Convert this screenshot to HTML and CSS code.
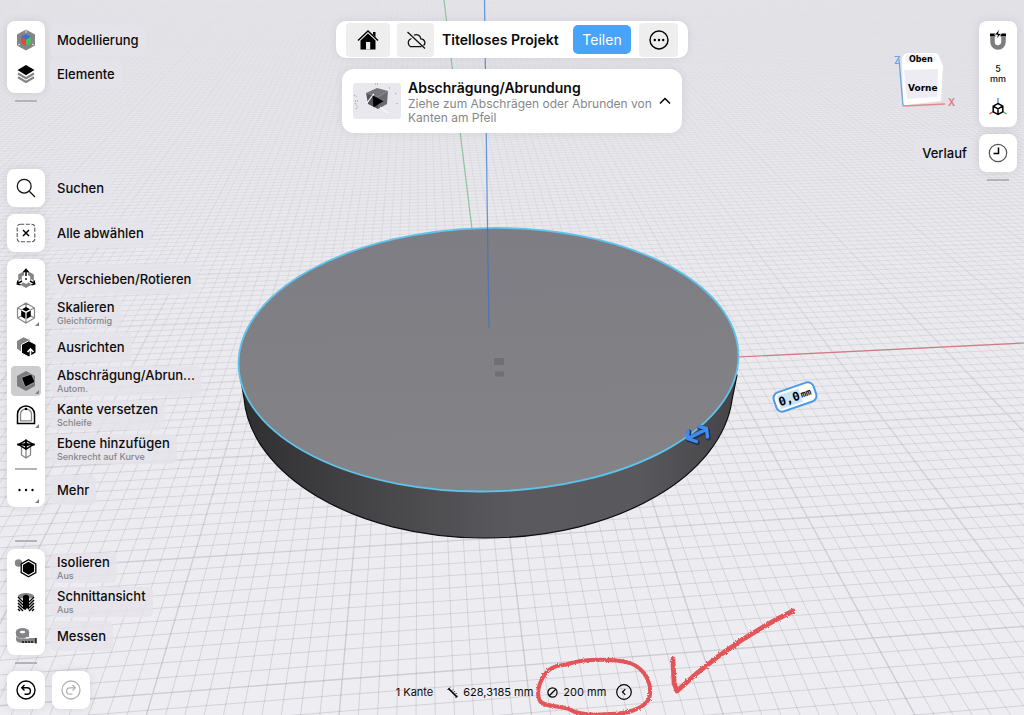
FILE: index.html
```html
<!DOCTYPE html>
<html lang="de">
<head>
<meta charset="utf-8">
<meta name="viewport" content="width=device-width, initial-scale=1">
<title>Titelloses Projekt</title>
<link rel="stylesheet" href="styles.css">
</head>
<body>
<div class="app">
  <svg class="scene" viewBox="0 0 1024 715" preserveAspectRatio="xMidYMid slice" aria-hidden="true">
    <defs>
      <linearGradient id="fadeMinor" gradientUnits="userSpaceOnUse" x1="0" y1="0" x2="0" y2="715">
        <stop offset="0" stop-color="#85858f" stop-opacity=".02"/>
        <stop offset=".15" stop-color="#85858f" stop-opacity=".07"/>
        <stop offset=".35" stop-color="#85858f" stop-opacity=".13"/>
        <stop offset=".6" stop-color="#85858f" stop-opacity=".2"/>
        <stop offset="1" stop-color="#85858f" stop-opacity=".26"/>
      </linearGradient>
      <linearGradient id="fadeMajor" gradientUnits="userSpaceOnUse" x1="0" y1="0" x2="0" y2="715">
        <stop offset="0" stop-color="#75757f" stop-opacity=".02"/>
        <stop offset=".3" stop-color="#75757f" stop-opacity=".09"/>
        <stop offset=".6" stop-color="#75757f" stop-opacity=".2"/>
        <stop offset="1" stop-color="#75757f" stop-opacity=".28"/>
      </linearGradient>
      <linearGradient id="side" x1="0" x2="1" y1="0" y2="0">
        <stop offset="0" stop-color="#2f2f31"/>
        <stop offset=".3" stop-color="#48484b"/>
        <stop offset=".55" stop-color="#5a5a5e"/>
        <stop offset=".8" stop-color="#59595d"/>
        <stop offset="1" stop-color="#444447"/>
      </linearGradient>
      <linearGradient id="top" x1="0" x2="0" y1="0" y2="1">
        <stop offset="0" stop-color="#7d7d83"/>
        <stop offset="1" stop-color="#848387"/>
      </linearGradient>
    </defs>
    <path id="gridMinor" fill="none" stroke="url(#fadeMinor)"/>
    <path id="gridMajor" fill="none" stroke="url(#fadeMajor)" stroke-width="1.4"/>
    <path d="M444 0L472 229" stroke="#8fc69c" stroke-width="1.2"/>
    <path d="M738 357L1024 343" stroke="#cf7a80" stroke-width="1.2"/>
    <path d="M240 375L244 398C250 474 353 538 485 538C620 538 722 474 732 400L737 375Z" fill="url(#side)" stroke="#0d0d0f" stroke-width="1.2"/>
    <ellipse cx="488.500" cy="359.700" rx="250" ry="131.700" transform="rotate(-1.200 488.500 359.700)" fill="url(#top)" stroke="#5ec4ee" stroke-width="1.800"/>
    <path d="M484.500 0L487.500 228" stroke="#5f93dc" stroke-width="1.200"/>
    <path d="M487.500 228L489 328" stroke="#4d74b0" stroke-width="1.200"/>
    <path d="M494 358h10v7h-10zM495 371.500h9v5h-9z" fill="#707074"/>
    <path d="M491 361v10" stroke="#7a7a7f"/>
    <g fill="none" stroke-linejoin="round" stroke-linecap="round">
      <path d="M688 431L687.500 438.500 696.500 441.500M699 426.500L706.500 428.500 707.500 437M688 438.500L706 429.500" stroke="#25324a" stroke-width="5" transform="translate(.8 1)"/>
      <path d="M688 431L687.500 438.500 696.500 441.500M699 426.500L706.500 428.500 707.500 437M688 438.500L706 429.500" stroke="#3f8cf3" stroke-width="3.400"/>
    </g>
  </svg>

  <label class="dimension"><input class="dimension-input" type="text" value="0,0" aria-label="Radius"><span>mm</span></label>

  <main class="overlay">
    <nav class="rail rail-left" aria-label="Werkzeuge">
      <div class="group">
        <button class="tool" type="button">
          <span class="ico"><svg width="20" height="22" viewBox="0 0 20 22"><path d="M10 .5L19 5.500V16.500L10 21.500L1 16.500V5.500Z" fill="#858587"/><path d="M10 4V1M4 15l-2 1M16 15l2 1" stroke="#e9e9e9"/><path d="M10 5l5 2.800-5 2.900-5-2.900z" fill="#3b6fd8"/><path d="M5 7.800l5 2.900V17l-5-3z" fill="#e0494a"/><path d="M15 7.800l-5 2.900V17l5-3z" fill="#4fbb59"/></svg></span>
          <span class="label">Modellierung</span>
        </button>
        <button class="tool" type="button">
          <span class="ico"><svg width="20" height="20" viewBox="0 0 20 20"><path d="M10 1L18.500 6 10 11.200 1.500 6z"/><path d="M2 9.500l8 4.700 8-4.700M2 13.300l8 4.700 8-4.700" fill="none" stroke="#858587" stroke-width="2.200"/></svg></span>
          <span class="label">Elemente</span>
        </button>
      </div>
      <hr class="handle">
      <div class="spacer spacer-wide"></div>

      <div class="stack">
        <div class="group">
          <button class="tool" type="button">
            <span class="ico"><svg width="20" height="20" viewBox="0 0 20 20" fill="none" stroke="#161616" stroke-width="1.300"><circle cx="8.200" cy="8.200" r="6.900"/><path d="M13.300 13.300L19 19"/></svg></span>
            <span class="label">Suchen</span>
          </button>
        </div>
        <div class="group">
          <button class="tool" type="button">
            <span class="ico"><svg width="20" height="20" viewBox="0 0 20 20" fill="none" stroke="#222" stroke-width="1.100"><rect x="1.200" y="1.200" width="17.600" height="17.600" rx="3" stroke-dasharray="4 1.600" stroke="#555"/><path d="M7 7l6 6M13 7l-6 6" stroke="#000" stroke-width="1.500"/></svg></span>
            <span class="label">Alle abwählen</span>
          </button>
        </div>
        <div class="group group-tools">
          <button class="tool" type="button">
            <span class="ico"><svg width="20" height="22" viewBox="0 0 20 22"><path d="M10 4L16 7.500V14.500L10 18L4 14.500V7.500Z" fill="none" stroke="#858587" stroke-width="3.600"/><g fill="none" stroke="#fff" stroke-width="4"><path d="M10 8V1M6 13l-5 3M14 13l5 3"/></g><g fill="none" stroke="#000" stroke-width="1.500"><path d="M10 8V2M7.500 4.300L10 1.500l2.500 2.800M6 13l-4.500 2.700M2 12.500l-.700 3.400 3.300 1M14 13l4.500 2.700M18 12.500l.700 3.400-3.300 1"/></g><circle cx="10" cy="11" r=".9"/></svg></span>
            <span class="label">Verschieben/Rotieren</span>
          </button>
          <button class="tool more" type="button">
            <span class="ico"><svg width="20" height="22" viewBox="0 0 20 22"><path d="M10 1l8.500 5v10L10 21l-8.500-5V6zM10 1v5M1.500 16L6 13.500M18.500 16L14 13.500M1.500 6L6 8M18.500 6L14 8M10 21v-4" fill="none" stroke="#858587" stroke-width="1.200"/><path d="M10 5l4 2.200-4 2.300-4-2.300zM5.200 8.500l4.200 2.300V17l-4.200-2.500zM14.800 8.500l-4.200 2.300V17l4.200-2.500z"/></svg></span>
            <span class="label">Skalieren<small>Gleichförmig</small></span>
          </button>
          <button class="tool" type="button">
            <span class="ico"><svg width="20" height="22" viewBox="0 0 20 22"><path d="M1 5L7.500 1.200 14 4v8L6 16 1 12.500z" fill="#858587"/><path d="M12.800 4.800L20 8.500v8.300l-7 4.200-7.500-4V8.600z" stroke="#fff"/><path d="M14.500 21v-7M11.500 16l3-3 3 3" fill="none" stroke="#fff" stroke-width="1.600"/></svg></span>
            <span class="label">Ausrichten</span>
          </button>
          <button class="tool more active" type="button" aria-pressed="true">
            <span class="ico"><svg width="20" height="22" viewBox="0 0 20 22"><path d="M10 1l9 5v10l-9 5-9-5V6z" fill="#7b7b7e"/><path d="M5.500 7.500L14 4.500q1.500-.4 2 1l3 6.500-8.500 4.500q-1.300.5-1.800-.6z" stroke="#cfcfd1" stroke-width=".6"/></svg></span>
            <span class="label">Abschrägung/Abrun...<small>Autom.</small></span>
          </button>
          <button class="tool more" type="button">
            <span class="ico"><svg width="20" height="20" viewBox="0 0 20 20" fill="none"><path d="M1.500 18.500V9a8.500 8 0 0 1 17 0v9.500z" stroke="#000" stroke-width="1.500"/><path d="M4.500 15.800V9a5.500 5 0 0 1 11 0v6.800z" stroke="#858587" stroke-width="1.300"/><circle cx="10" cy="4" r="1.300" fill="#000"/></svg></span>
            <span class="label">Kante versetzen<small>Schleife</small></span>
          </button>
          <button class="tool" type="button">
            <span class="ico"><svg width="20" height="22" viewBox="0 0 20 22"><path d="M5.500 9v8l4.500 3 4.500-3V9M10 12v8" fill="none" stroke="#858587" stroke-width="1.300"/><path d="M10 1.500l8.800 5L10 12 1.200 6.500z"/><path d="M10 3.800l4.800 2.800L10 9.500 5.200 6.600z" fill="none" stroke="#fff" stroke-width="1.100"/><path d="M10 1.500v10M1.200 6.500h17.600" stroke="#000" stroke-width="1.800"/></svg></span>
            <span class="label">Ebene hinzufügen<small>Senkrecht auf Kurve</small></span>
          </button>
          <hr class="divider">
          <button class="tool more" type="button">
            <span class="ico"><svg width="20" height="20" viewBox="0 0 20 20"><circle cx="3.500" cy="10" r="1.200"/><circle cx="10" cy="10" r="1.200"/><circle cx="16.500" cy="10" r="1.200"/></svg></span>
            <span class="label">Mehr</span>
          </button>
        </div>
      </div>
      <div class="spacer spacer-narrow"></div>

      <hr class="handle">
      <div class="group">
        <button class="tool" type="button">
          <span class="ico"><svg width="24" height="22" viewBox="0 0 24 22"><circle cx="4.500" cy="6" r="3.700" fill="#858587"/><path d="M14.500 2.800l7.300 4.200v8.600l-7.300 4.200-7.300-4.200V7z" fill="#fff" stroke="#000" stroke-width="1.300"/><path d="M14.500 4.800l5.600 3.200v6.600l-5.600 3.200-5.600-3.200V8z"/></svg></span>
          <span class="label">Isolieren<small>Aus</small></span>
        </button>
        <button class="tool" type="button">
          <span class="ico"><svg width="18" height="20" viewBox="0 0 18 20"><ellipse cx="9" cy="4" rx="8" ry="3" fill="#858587"/><path d="M6 4l3-1.500L12 4v14l-2-2-1.500 2L6 17z"/><path d="M1 5l5 5M1 8l5 5M1 11l5 5M1 14l5 5M1 17l2 2M17 5l-5 5M17 8l-5 5M17 11l-5 5M17 14l-5 5M17 17l-2 2" stroke="#000" stroke-width="1.400"/></svg></span>
          <span class="label">Schnittansicht<small>Aus</small></span>
        </button>
        <button class="tool" type="button">
          <span class="ico"><svg width="22" height="18" viewBox="0 0 22 18"><path d="M1 6v6c0 3 3 4 7 4h13v-5h-7V6z" fill="#858587"/><path d="M1 8.500c2 4 8 3 11 1.500h2v1.500H9C4 12 2 11 1 9.500z" fill="#fff"/><ellipse cx="7.500" cy="5.200" rx="6.700" ry="4.200" fill="#858587"/><ellipse cx="7.500" cy="5" rx="2.700" ry="1.300" fill="#fff"/><path d="M8 16v-2M11 16v-2M14 16v-2M17 16v-2M21 16.500V11" stroke="#000" stroke-width="1.300"/></svg></span>
          <span class="label">Messen</span>
        </button>
      </div>
      <hr class="handle">
      <div class="history">
        <button class="square" type="button" aria-label="Rückgängig"><svg width="20" height="20" viewBox="0 0 20 20" fill="none" stroke="#000" stroke-width="1.400"><circle cx="10" cy="10" r="9"/><path d="M8.500 5L5.700 7.800l2.800 2.800M6 7.800h5.200a3.200 3.200 0 0 1 0 6.400H8.500"/></svg></button>
        <button class="square" type="button" aria-label="Wiederholen" disabled><svg width="20" height="20" viewBox="0 0 20 20" fill="none" stroke="#b2b2b4" stroke-width="1.300"><circle cx="10" cy="10" r="9"/><path d="M11.500 5l2.800 2.800-2.800 2.800M14 7.800H8.800a3.200 3.200 0 0 0 0 6.400h2.700"/></svg></button>
      </div>
    </nav>

    <div class="center">
      <header class="topbar">
        <button class="bar-btn bar-home" type="button" aria-label="Start"><svg width="22" height="20" viewBox="0 0 22 20"><path d="M1 10.500L11 1l10 9.500" fill="none" stroke="#000" stroke-width="1.400"/><path d="M16 2h2.500v5L16 4.700z"/><path d="M11 3.500l7.500 7V19.500h-15v-9z"/><path d="M9 12h4.200v7.500H9z" fill="#eee"/></svg></button>
        <button class="bar-btn bar-cloud" type="button" aria-label="Nicht synchronisiert"><svg width="20" height="20" viewBox="0 0 20 20" fill="none" stroke="#111" stroke-width="1.300"><path d="M5.500 8.500a4.500 4.500 0 0 0-1 8.200h11M8 5.200c3-1.700 6.500.3 6.800 3.600 4 .2 5.300 4.700 2.700 6.700M1.500 2L19 18.500"/></svg></button>
        <h1 class="title">Titelloses Projekt</h1>
        <button class="share" type="button">Teilen</button>
        <button class="bar-btn bar-more" type="button" aria-label="Weitere Optionen"><svg width="20" height="20" viewBox="0 0 20 20"><circle cx="10" cy="10" r="9" fill="none" stroke="#000" stroke-width="1.400"/><circle cx="5.800" cy="10" r="1.200"/><circle cx="10" cy="10" r="1.200"/><circle cx="14.200" cy="10" r="1.200"/></svg></button>
      </header>
      <section class="hint">
        <svg class="thumb" viewBox="0 0 48 36" role="img" aria-label="Video"><rect width="48" height="36" rx="3" fill="#e9e8ee"/><path d="M1 12l3 2M2 18h4M3 26l2-3M22 1h3M36 5h2M42 10l2 1M2 20l2 3M44 20v2" stroke="#777" stroke-width=".8" stroke-dasharray="1 1"/><path d="M13 10l11-5 11 3-10 6z" fill="#77777b"/><path d="M13 10l12 4v12l-10-5z" fill="#56565a"/><path d="M25 14l10-6-1 13-9 5z" fill="#6c6c70"/><path d="M14 20l6-8 1-1" stroke="#fff" stroke-width="1.200"/><path d="M19.500 12.500l11 5.800-10 6z"/><path d="M27 24l8 6" stroke="#fff"/></svg>
        <div class="hint-text">
          <h2>Abschrägung/Abrundung</h2>
          <p>Ziehe zum Abschrägen oder Abrunden von Kanten am Pfeil</p>
        </div>
        <button class="collapse" type="button" aria-label="Einklappen"><svg width="12" height="8" viewBox="0 0 12 8" fill="none" stroke="#000" stroke-width="1.500"><path d="M1 6.500L6 1.500l5 5"/></svg></button>
      </section>
      <div class="spacer"></div>
      <footer class="status">
        <span>1 Kante</span>
        <span class="metric"><svg width="11" height="11" viewBox="0 0 11 11" fill="none" stroke="#000"><path d="M1.500 1.500l8.500 8.500" stroke-width="1.700"/><path d="M.500 3L3 .5M8.500 11L11 8.500M5 3.500l1-1M6.800 5.300l1-1M8.600 7l1-1"/></svg>628,3185 mm</span>
        <span class="metric"><svg width="11" height="11" viewBox="0 0 11 11" fill="none" stroke="#000" stroke-width="1.200"><circle cx="5.500" cy="5.500" r="4.600"/><path d="M2 9l7-7"/></svg>200 mm</span>
        <button class="more-metrics" type="button" aria-label="Mehr Messwerte"><svg width="16" height="16" viewBox="0 0 16 16" fill="none" stroke="#000" stroke-width="1.200"><circle cx="8" cy="8" r="7.300"/><path d="M9.300 5.200L6.500 8l2.800 2.800"/></svg></button>
      </footer>
    </div>

    <aside class="right">
      <svg class="cube" width="72" height="60" viewBox="0 0 72 60" role="img" aria-label="Ansichtswürfel">
        <path d="M10 4L13 1Q14 0 17 0H42Q46 0 47 3L51 13L49 48L14 52Q11 52 11 48Z" fill="#fff"/>
        <path d="M13 5l2-3.500h27L45 8l-30 2z" fill="#f1f0f5"/>
        <path d="M12 17l34-1-1 28-30 2z" fill="#edecf2"/>
        <path d="M7 6l4 47" stroke="#6ea3e8" stroke-width="1.300"/>
        <path d="M11 53l42-2" stroke="#e08a8d" stroke-width="1.300"/>
        <text class="cube-text cube-small" x="17" y="9">Oben</text>
        <text class="cube-text" x="16" y="38">Vorne</text>
        <text class="cube-axis axis-z" x="2" y="11">Z</text>
        <text class="cube-axis axis-x" x="56" y="53">X</text>
      </svg>
      <div class="rail-right">
        <div class="group snap">
          <button class="snap-btn" type="button" aria-label="Fangen"><svg width="18" height="22" viewBox="0 0 18 22"><path d="M3.500 8v5a5.500 5.500 0 0 0 11 0V8" fill="none" stroke="#7d7d80" stroke-width="4.500"/><path d="M1 4.500h5.500v3H1zM11.500 4.500H17v3h-5.500z"/><path d="M10.500 0L5.500 6h3l-1 4 5-5.500h-3z" stroke="#fff" stroke-width=".7"/></svg></button>
          <button class="snap-btn unit" type="button">5<br>mm</button>
          <button class="snap-btn" type="button" aria-label="Achsen"><svg width="18" height="20" viewBox="0 0 18 20" fill="none"><path d="M9 0v6" stroke="#4688de" stroke-width="1.300"/><path d="M5 13l-4.500 3" stroke="#d84b4e" stroke-width="1.300"/><path d="M13 13l4.500 3" stroke="#51b35a" stroke-width="1.300"/><path d="M9 5.500l4.800 2.700v5.600L9 16.500l-4.800-2.700V8.200zM4.200 8.200L9 11l4.800-2.800M9 11v5.500" stroke="#000" stroke-width="1.500"/></svg></button>
        </div>
        <button class="tool timeline" type="button">
          <span class="label">Verlauf</span>
          <span class="square"><svg width="20" height="20" viewBox="0 0 20 20" fill="none" stroke="#555" stroke-width="1.200"><circle cx="10" cy="10" r="8.700"/><path d="M10.500 4.500v6h-5" stroke="#000" stroke-width="1.500"/></svg></span>
        </button>
        <hr class="handle">
      </div>
    </aside>
  </main>

  <svg class="scene ink" viewBox="0 0 1024 715" preserveAspectRatio="xMidYMid slice" aria-hidden="true">
    <defs><filter id="chalk" x="-5%" y="-5%" width="110%" height="110%"><feTurbulence type="fractalNoise" baseFrequency=".6" numOctaves="2" seed="4"/><feDisplacementMap in="SourceGraphic" scale="3"/></filter></defs>
    <g filter="url(#chalk)" fill="none" stroke="#e2484d" stroke-linecap="round" stroke-linejoin="round" opacity=".92">
      <path d="M568 664C586 658 615 659 630 663C646 669 653 685 649 699C643 709 627 714 610 714C595 715 578 715 571 710C563 705 545 708 540 701C535 692 541 674 552 668C559 664 562 666 568 664Z" stroke-width="4"/>
      <path d="M793 611C752 631 714 656 677 691L674 683C674 675 673 667 673 659" stroke-width="4.800"/>
    </g>
  </svg>
</div>
<script src="grid.js"></script>
</body>
</html>
```
FILE: styles.css
```css
* { box-sizing: border-box; }

body {
  margin: 0;
  font-family: Inter, "Liberation Sans", sans-serif;
  color: #0b0b0c;
}

button {
  font: inherit;
  color: inherit;
  border: 0;
  padding: 0;
  background: none;
  cursor: pointer;
}

svg { display: block; flex: none; }

.app {
  position: relative;
  display: flex;
  min-height: 100vh;
  overflow: hidden;
  background: linear-gradient(#e6e5ea, #eae9ee 35%, #eeedf2);
}

.scene {
  position: absolute;
  inset: 0;
  width: 100%;
  height: 100%;
}

.ink { pointer-events: none; }

.overlay {
  position: relative;
  flex: 1;
  display: grid;
  grid-template-columns: 1fr auto 1fr;
  padding: 21px 7px 6px;
}

.spacer { flex: 1; }
.spacer-wide { flex: 7; }
.spacer-narrow { flex: 3; }

.rail {
  display: flex;
  flex-direction: column;
  align-items: flex-start;
}

.stack {
  display: flex;
  flex-direction: column;
  align-items: flex-start;
  gap: 7px;
}

.group {
  position: relative;
  padding: 2px 0;
}

.group::before {
  content: "";
  position: absolute;
  inset: 0 auto 0 0;
  width: 38px;
  border-radius: 8px;
  background: #fff;
  box-shadow: 0 0 8px rgba(60, 60, 80, .12);
}

.group-tools { padding: 3px 0 0; }

.tool {
  position: relative;
  display: flex;
  align-items: center;
  height: 34px;
  text-align: left;
}

.ico {
  position: relative;
  display: flex;
  flex: none;
  align-items: center;
  justify-content: center;
  width: 38px;
  height: 34px;
}

.active .ico {
  width: 30px;
  height: 30px;
  margin: 0 4px;
  border-radius: 4px;
  background: #cdcdcf;
}

.more .ico::after {
  content: "";
  position: absolute;
  right: 6px;
  bottom: 4px;
  border: 2px solid #808083;
  border-top-color: transparent;
  border-left-color: transparent;
}

.active .ico::after { right: 2px; bottom: 2px; }

.label {
  display: flex;
  flex-direction: column;
  justify-content: center;
  height: 30px;
  margin-left: 5px;
  padding: 0 7px;
  border-radius: 6px;
  background: rgba(229, 228, 234, .8);
  font-size: 13px;
  font-weight: 500;
  line-height: 15px;
  white-space: nowrap;
}

.label small {
  font-size: 9px;
  font-weight: 500;
  line-height: 11px;
  color: #85858a;
}

.handle,
.divider {
  width: 22px;
  height: 2px;
  margin: 7px 8px;
  border: 0;
  background: #b3b3b8;
}

.divider {
  position: relative;
  margin: 2px 8px 3px;
}

.history { display: flex; gap: 7px; }

.square {
  display: flex;
  align-items: center;
  justify-content: center;
  width: 38px;
  height: 38px;
  border-radius: 8px;
  background: #fff;
  box-shadow: 0 0 8px rgba(60, 60, 80, .12);
}

.center {
  display: flex;
  flex-direction: column;
  align-items: center;
}

.topbar {
  display: flex;
  align-items: center;
  height: 37px;
  padding: 0 10px;
  border-radius: 10px;
  background: #fff;
  box-shadow: 0 0 8px rgba(60, 60, 80, .1);
}

.bar-btn {
  display: flex;
  align-items: center;
  justify-content: center;
  height: 34px;
  border-radius: 4px;
  background: #eeeeef;
}

.bar-home { width: 44px; margin-right: 7px; }
.bar-cloud { width: 37px; }
.bar-more { width: 39px; }

.title {
  width: 139px;
  margin: 0;
  padding-left: 8px;
  font-size: 14px;
  font-weight: 600;
  white-space: nowrap;
}

.share {
  width: 58px;
  height: 29px;
  margin-right: 8px;
  border-radius: 5px;
  background: #48a3f9;
  color: #fff;
  font-size: 14px;
}

.hint {
  display: flex;
  align-items: center;
  width: 340px;
  min-height: 64px;
  margin-top: 11px;
  padding: 0 11px;
  border-radius: 12px;
  background: #fff;
  box-shadow: 0 0 8px rgba(60, 60, 80, .1);
}

.thumb { width: 48px; height: 36px; }

.hint-text { flex: 1; padding-left: 7px; }

.hint h2,
.hint p { margin: 0; }

.hint h2 {
  font-size: 14px;
  font-weight: 600;
  line-height: 19px;
}

.hint p {
  font-size: 12px;
  line-height: 14px;
  color: #87878a;
}

.status {
  display: flex;
  align-items: center;
  gap: 14px;
  height: 34px;
  padding-left: 4px;
  font-size: 11px;
  white-space: nowrap;
}

.metric { display: flex; align-items: center; gap: 5px; }

.more-metrics { margin-left: -4px; }

.right {
  display: flex;
  justify-content: flex-end;
  align-items: flex-start;
}

.cube { margin-top: 32px; margin-right: -49px; }

.cube-text {
  font-family: "DejaVu Sans", sans-serif;
  font-size: 9px;
  font-weight: 700;
}

.cube-small { font-size: 8px; }

.cube-axis { font-size: 10px; font-weight: 600; }
.axis-z { fill: #6ea3e8; }
.axis-x { fill: #e0797d; }

.rail-right {
  display: flex;
  flex-direction: column;
  align-items: flex-end;
}

.snap {
  display: flex;
  flex-direction: column;
  width: 38px;
  padding: 2px 0;
}

.snap-btn {
  position: relative;
  display: flex;
  align-items: center;
  justify-content: center;
  height: 34px;
}

.unit {
  font-size: 9px;
  font-weight: 500;
  line-height: 10px;
}

.timeline { height: 38px; margin-top: 7px; }

.timeline .label { margin: 0 5px 0 0; }

/* Dimension tag that follows the edge arrow on the canvas */
.dimension {
  position: absolute;
  z-index: 1;
  left: 75.500%;
  top: 54%;
  display: flex;
  align-items: center;
  height: 22px;
  padding: 0 3px;
  border: 2px solid #4a9bea;
  border-radius: 7px;
  background: #fff;
  font-family: "DejaVu Sans Mono", monospace;
  font-size: 9px;
  font-weight: 700;
  transform: rotate(-19deg);
}

.dimension-input {
  width: 23px;
  padding: 0;
  border: 0;
  background: #c9e6f8;
  font-family: inherit;
  font-size: 12px;
  font-weight: 700;
}
```
FILE: grid.js
```js
// Ground-plane grid, projected to the canvas; one major cell holds ten minor ones.
function project(j, k) {
  const w = 1 + 0.01134 * j - 0.1146 * k;
  const x = (489 + 124 * j - 48.1 * k) / w;
  const y = (369 - 1.62 * j + 22.46 * k) / w;
  return x.toFixed(2) + " " + y.toFixed(2);
}

let minor = "";
let major = "";

function add(index, from, to) {
  const segment = "M" + from + "L" + to;
  if (index % 10 === 0) major += segment;
  else minor += segment;
}

for (let i = -120; i <= 170; i++) {
  add(i, project(i / 10, -22), project(i / 10, 5));
}
for (let i = -220; i <= 50; i++) {
  add(i, project(-13, i / 10), project(18, i / 10));
}

document.getElementById("gridMinor").setAttribute("d", minor);
document.getElementById("gridMajor").setAttribute("d", major);
```
